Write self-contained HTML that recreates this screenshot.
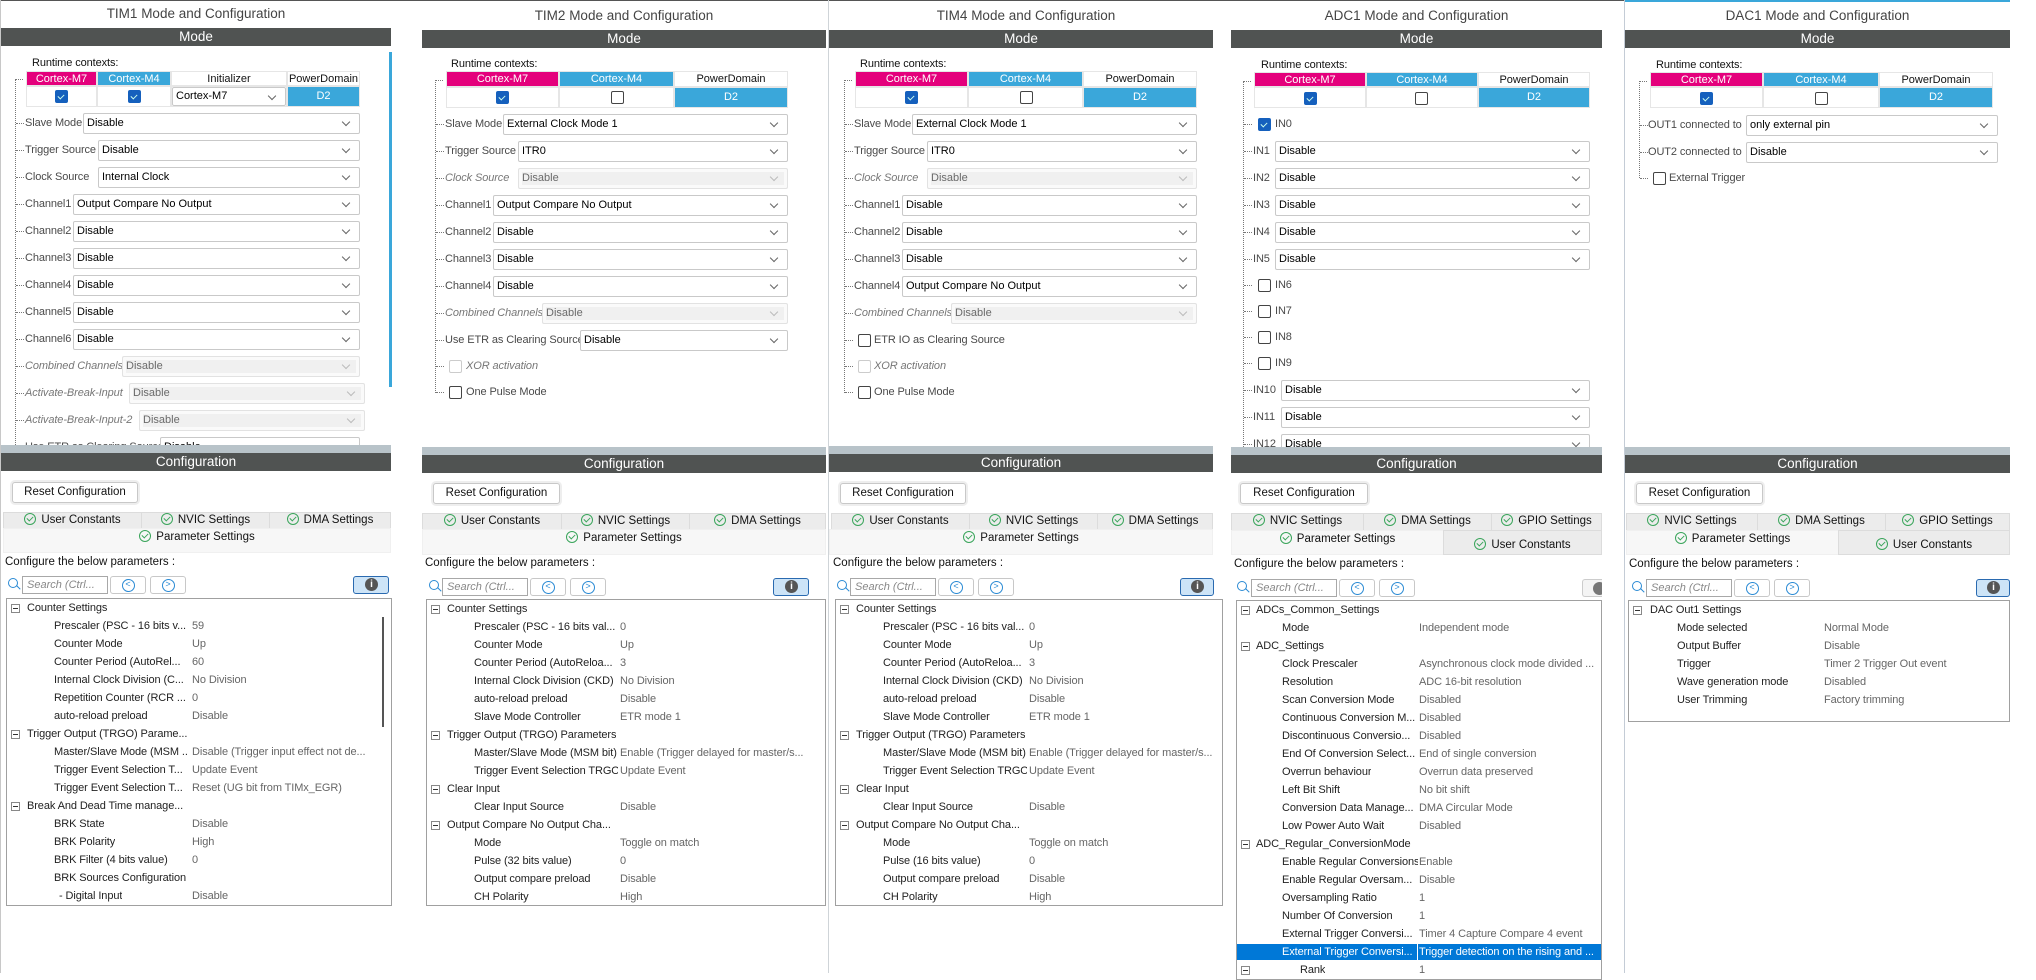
<!DOCTYPE html>
<html><head><meta charset="utf-8"><style>
*{box-sizing:border-box;margin:0;padding:0}
body{width:2036px;height:973px;overflow:hidden;background:#fff;position:relative;font-family:"Liberation Sans",Arial,sans-serif;font-size:12px;color:#222}
.a{position:absolute;white-space:nowrap}
.ti{position:absolute;font-size:13.5px;color:#444;text-align:center;line-height:18px}
.hd{position:absolute;height:18px;background:#505352;color:#fff;font-size:13.5px;text-align:center;line-height:18px}
.gs{position:absolute;height:8px;background:#b8c3c9}
.s{position:absolute;height:21px;border:1px solid #c9c9c9;border-radius:2px;background:#fff;font-size:11px;line-height:19px;padding-left:3px;color:#000;white-space:nowrap}
.s::after{content:"";position:absolute;right:10px;top:5px;width:5px;height:5px;border-right:1px solid #666;border-bottom:1px solid #666;transform:rotate(45deg)}
.s.d{background:#f0f0f0;border-color:#e2e2e2;color:#6a6a6a;box-shadow:inset 0 0 0 3px #fafafa}
.s.d::after{border-color:#bbb}
.lb{position:absolute;font-size:11px;letter-spacing:-0.1px;line-height:16px;color:#4a4a4a;white-space:nowrap}
.lb.i{font-style:italic;color:#777}
.dv{position:absolute;border-left:1px dotted #777}
.dh{position:absolute;width:8px;border-top:1px dotted #777}
.cb{position:absolute;width:13px;height:13px;border:1px solid #444;border-radius:2px;background:#fff}
.cb.g{border-color:#ccc}
.cb.on{background:#1560bd;border-color:#1560bd}
.cb.on::after{content:"";position:absolute;left:3px;top:2px;width:3px;height:5px;border-right:1px solid #cfe;border-bottom:1px solid #cfe;transform:rotate(45deg)}
.c{position:absolute;font-size:11px;text-align:center;line-height:15px;color:#fff;border:1px solid #e6e6e6}
.m7{background:#e4007c}.m4{background:#3aa7da}.wh{background:#fff;color:#111}
.bt{position:absolute;height:21px;border:1px solid #c8c8c8;border-radius:3px;background:#fff;font-size:11.5px;line-height:19px;text-align:center;color:#111;box-shadow:0 0 0 2px #eee}
.tb{position:absolute;background:#ececec;border:1px solid #dcdcdc;font-size:11.5px;text-align:center;color:#111;line-height:15px;white-space:nowrap;overflow:hidden}
.tb.ac{background:#f7f7f7;border-color:#f0f0f0;line-height:24px}
.tb.dk{line-height:26px}
.ck{display:inline-block;width:12px;height:12px;border:1.3px solid #3aa55b;border-radius:50%;vertical-align:-2px;margin-right:5px;position:relative}
.ck::after{content:"";position:absolute;left:3px;top:1px;width:3px;height:5px;border-right:1.3px solid #3aa55b;border-bottom:1.3px solid #3aa55b;transform:rotate(45deg)}
.cf{position:absolute;font-size:11.5px;color:#111}
.sr{position:absolute;height:18px;border:1px solid #a8a8a8;font-size:11px;font-style:italic;color:#888;line-height:16px;padding-left:4px;overflow:hidden;white-space:nowrap}
.nb{position:absolute;height:18px;width:36px;border:1px solid #c8c8c8;border-radius:3px;background:#fff;font-size:9px;color:#2a8ad4;text-align:center;line-height:15px}
.nb::after{content:"";position:absolute;left:11px;top:2px;width:11px;height:11px;border:1.3px solid #2a8ad4;border-radius:50%}
.ib{position:absolute;height:18px;border:1.5px solid #2a6ab0;border-radius:3px;background:#cde4f7}
.ib::after{content:"i";position:absolute;left:50%;margin-left:-6px;top:1px;width:13px;height:13px;border-radius:50%;background:#555;color:#fff;font-weight:bold;font-size:10px;text-align:center;line-height:13px}
.mg{position:absolute;width:10px;height:10px;border:1.6px solid #2a8ad4;border-radius:50%}
.mg::after{content:"";position:absolute;left:7px;top:8px;width:5px;border-top:1.6px solid #2a8ad4;transform:rotate(45deg)}
.bx{position:absolute;border:1px solid #a0a0a0;background:#fff;overflow:hidden}
.r{position:absolute;font-size:11px;letter-spacing:-0.1px;line-height:18px;height:18px;color:#222;white-space:nowrap;max-width:var(--w);overflow:hidden}
.r.g{max-width:none}
.v{position:absolute;font-size:11px;letter-spacing:-0.1px;line-height:18px;height:18px;color:#666;white-space:nowrap}
.ex{position:absolute;width:9px;height:9px;border:1px solid #888}
.ex::after{content:"";position:absolute;left:1px;top:3px;width:5px;border-top:1px solid #333}
</style></head><body>

<div class="a" style="left:0;top:0;width:1624px;height:1px;background:#555"></div>
<div class="a" style="left:1625px;top:0;width:385px;height:2px;background:#3aa7da"></div>
<div class="a" style="left:0;top:0;width:1px;height:973px;background:#c8c8c8"></div>
<div class="a" style="left:828px;top:0;width:1px;height:973px;background:#cfd4d8"></div>
<div class="a" style="left:1624px;top:0;width:1px;height:973px;background:#c4ccd6"></div>

<!-- ================= TIM1 ================= -->
<div class="ti" style="left:1px;top:5px;width:390px">TIM1 Mode and Configuration</div>
<div class="hd" style="left:1px;top:28px;width:390px">Mode</div>
<div class="a" style="left:389px;top:52px;width:3px;height:335px;background:#3aa7da"></div>
<div class="lb" style="left:32px;top:55px;color:#111">Runtime contexts:</div>
<div class="c m7" style="left:26px;top:71px;width:71px;height:15px">Cortex-M7</div>
<div class="c m4" style="left:97px;top:71px;width:74px;height:15px">Cortex-M4</div>
<div class="c wh" style="left:171px;top:71px;width:116px;height:15px">Initializer</div>
<div class="c wh" style="left:287px;top:71px;width:73px;height:15px">PowerDomain</div>
<div class="c wh" style="left:26px;top:86px;width:71px;height:21px"></div>
<div class="c wh" style="left:97px;top:86px;width:74px;height:21px"></div>
<div class="c wh" style="left:171px;top:86px;width:116px;height:21px"></div>
<div class="c m4" style="left:287px;top:86px;width:73px;height:21px;line-height:19px">D2</div>
<div class="cb on" style="left:55px;top:90px"></div>
<div class="cb on" style="left:128px;top:90px"></div>
<div class="s" style="left:172px;top:87px;width:114px;height:19px;line-height:17px">Cortex-M7</div>
<div class="dv" style="left:15px;top:79px;height:370px"></div>
<div class="dh" style="left:15px;top:79px"></div>

<div class="dh" style="left:16px;top:123px"></div><div class="lb" style="left:25px;top:115px">Slave Mode</div><div class="s" style="left:83px;top:113px;width:277px">Disable</div>
<div class="dh" style="left:16px;top:150px"></div><div class="lb" style="left:25px;top:142px">Trigger Source</div><div class="s" style="left:98px;top:140px;width:262px">Disable</div>
<div class="dh" style="left:16px;top:177px"></div><div class="lb" style="left:25px;top:169px">Clock Source</div><div class="s" style="left:98px;top:167px;width:262px">Internal Clock</div>
<div class="dh" style="left:16px;top:204px"></div><div class="lb" style="left:25px;top:196px">Channel1</div><div class="s" style="left:73px;top:194px;width:287px">Output Compare No Output</div>
<div class="dh" style="left:16px;top:231px"></div><div class="lb" style="left:25px;top:223px">Channel2</div><div class="s" style="left:73px;top:221px;width:287px">Disable</div>
<div class="dh" style="left:16px;top:258px"></div><div class="lb" style="left:25px;top:250px">Channel3</div><div class="s" style="left:73px;top:248px;width:287px">Disable</div>
<div class="dh" style="left:16px;top:285px"></div><div class="lb" style="left:25px;top:277px">Channel4</div><div class="s" style="left:73px;top:275px;width:287px">Disable</div>
<div class="dh" style="left:16px;top:312px"></div><div class="lb" style="left:25px;top:304px">Channel5</div><div class="s" style="left:73px;top:302px;width:287px">Disable</div>
<div class="dh" style="left:16px;top:339px"></div><div class="lb" style="left:25px;top:331px">Channel6</div><div class="s" style="left:73px;top:329px;width:287px">Disable</div>
<div class="dh" style="left:16px;top:366px"></div><div class="lb i" style="left:25px;top:358px">Combined Channels</div><div class="s d" style="left:122px;top:356px;width:238px">Disable</div>
<div class="dh" style="left:16px;top:393px"></div><div class="lb i" style="left:25px;top:385px">Activate-Break-Input</div><div class="s d" style="left:129px;top:383px;width:236px">Disable</div>
<div class="dh" style="left:16px;top:420px"></div><div class="lb i" style="left:25px;top:412px">Activate-Break-Input-2</div><div class="s d" style="left:139px;top:410px;width:226px">Disable</div>
<div class="dh" style="left:16px;top:447px"></div><div class="lb" style="left:25px;top:439px">Use ETR as Clearing Source</div><div class="s" style="left:160px;top:437px;width:200px">Disable</div>

<div class="gs" style="left:1px;top:445px;width:390px"></div>
<div class="hd" style="left:1px;top:453px;width:390px">Configuration</div>
<div class="bt" style="left:12px;top:482px;width:126px">Reset Configuration</div>
<div class="tb" style="left:3px;top:512px;width:139px;height:17px"><span class="ck"></span>User Constants</div>
<div class="tb" style="left:141px;top:512px;width:129px;height:17px"><span class="ck"></span>NVIC Settings</div>
<div class="tb" style="left:269px;top:512px;width:122px;height:17px"><span class="ck"></span>DMA Settings</div>
<div class="tb ac" style="left:3px;top:528px;width:388px;height:25px;line-height:16px"><span class="ck"></span>Parameter Settings</div>
<div class="cf" style="left:5px;top:556px">Configure the below parameters :</div>
<div class="mg" style="left:8px;top:578px"></div>
<div class="sr" style="left:22px;top:576px;width:86px">Search (Ctrl...</div>
<div class="nb" style="left:110px;top:576px">&lt;</div><div class="nb" style="left:150px;top:576px">&gt;</div>
<div class="ib" style="left:353px;top:576px;width:36px"></div>
<div class="bx" style="left:6px;top:598px;width:386px;height:308px;--w:134px">
<div class="a" style="left:375px;top:18px;width:2px;height:110px;background:#555"></div>
<div class="ex" style="left:4px;top:5px"></div><div class="r g" style="left:20px;top:0">Counter Settings</div>
<div class="r" style="left:47px;top:18px">Prescaler (PSC - 16 bits v...</div><div class="v" style="left:185px;top:18px">59</div>
<div class="r" style="left:47px;top:36px">Counter Mode</div><div class="v" style="left:185px;top:36px">Up</div>
<div class="r" style="left:47px;top:54px">Counter Period (AutoRel...</div><div class="v" style="left:185px;top:54px">60</div>
<div class="r" style="left:47px;top:72px">Internal Clock Division (C...</div><div class="v" style="left:185px;top:72px">No Division</div>
<div class="r" style="left:47px;top:90px">Repetition Counter (RCR ...</div><div class="v" style="left:185px;top:90px">0</div>
<div class="r" style="left:47px;top:108px">auto-reload preload</div><div class="v" style="left:185px;top:108px">Disable</div>
<div class="ex" style="left:4px;top:131px"></div><div class="r g" style="left:20px;top:126px">Trigger Output (TRGO) Parame...</div>
<div class="r" style="left:47px;top:144px">Master/Slave Mode (MSM ...</div><div class="v" style="left:185px;top:144px">Disable (Trigger input effect not de...</div>
<div class="r" style="left:47px;top:162px">Trigger Event Selection T...</div><div class="v" style="left:185px;top:162px">Update Event</div>
<div class="r" style="left:47px;top:180px">Trigger Event Selection T...</div><div class="v" style="left:185px;top:180px">Reset (UG bit from TIMx_EGR)</div>
<div class="ex" style="left:4px;top:203px"></div><div class="r g" style="left:20px;top:198px">Break And Dead Time manage...</div>
<div class="r" style="left:47px;top:216px">BRK State</div><div class="v" style="left:185px;top:216px">Disable</div>
<div class="r" style="left:47px;top:234px">BRK Polarity</div><div class="v" style="left:185px;top:234px">High</div>
<div class="r" style="left:47px;top:252px">BRK Filter (4 bits value)</div><div class="v" style="left:185px;top:252px">0</div>
<div class="r g" style="left:47px;top:270px">BRK Sources Configuration</div>
<div class="r" style="left:52px;top:288px">- Digital Input</div><div class="v" style="left:185px;top:288px">Disable</div>
</div>

<!-- ================= TIM2 ================= -->
<div class="ti" style="left:422px;top:7px;width:404px">TIM2 Mode and Configuration</div>
<div class="hd" style="left:422px;top:30px;width:404px">Mode</div>
<div class="lb" style="left:451px;top:56px;color:#111">Runtime contexts:</div>
<div class="c m7" style="left:446px;top:71px;width:113px;height:16px">Cortex-M7</div>
<div class="c m4" style="left:559px;top:71px;width:115px;height:16px">Cortex-M4</div>
<div class="c wh" style="left:674px;top:71px;width:114px;height:16px">PowerDomain</div>
<div class="c wh" style="left:446px;top:87px;width:113px;height:21px"></div>
<div class="c wh" style="left:559px;top:87px;width:115px;height:21px"></div>
<div class="c m4" style="left:674px;top:87px;width:114px;height:21px;line-height:19px">D2</div>
<div class="cb on" style="left:496px;top:91px"></div>
<div class="cb" style="left:611px;top:91px"></div>
<div class="dv" style="left:435px;top:80px;height:313px"></div>
<div class="dh" style="left:435px;top:80px"></div>
<div class="dh" style="left:436px;top:124px"></div><div class="lb" style="left:445px;top:116px">Slave Mode</div><div class="s" style="left:503px;top:114px;width:285px">External Clock Mode 1</div>
<div class="dh" style="left:436px;top:151px"></div><div class="lb" style="left:445px;top:143px">Trigger Source</div><div class="s" style="left:518px;top:141px;width:270px">ITR0</div>
<div class="dh" style="left:436px;top:178px"></div><div class="lb i" style="left:445px;top:170px">Clock Source</div><div class="s d" style="left:518px;top:168px;width:270px">Disable</div>
<div class="dh" style="left:436px;top:205px"></div><div class="lb" style="left:445px;top:197px">Channel1</div><div class="s" style="left:493px;top:195px;width:295px">Output Compare No Output</div>
<div class="dh" style="left:436px;top:232px"></div><div class="lb" style="left:445px;top:224px">Channel2</div><div class="s" style="left:493px;top:222px;width:295px">Disable</div>
<div class="dh" style="left:436px;top:259px"></div><div class="lb" style="left:445px;top:251px">Channel3</div><div class="s" style="left:493px;top:249px;width:295px">Disable</div>
<div class="dh" style="left:436px;top:286px"></div><div class="lb" style="left:445px;top:278px">Channel4</div><div class="s" style="left:493px;top:276px;width:295px">Disable</div>
<div class="dh" style="left:436px;top:313px"></div><div class="lb i" style="left:445px;top:305px">Combined Channels</div><div class="s d" style="left:542px;top:303px;width:246px">Disable</div>
<div class="dh" style="left:436px;top:340px"></div><div class="lb" style="left:445px;top:332px">Use ETR as Clearing Source</div><div class="s" style="left:580px;top:330px;width:208px">Disable</div>
<div class="dh" style="left:436px;top:366px"></div><div class="cb g" style="left:449px;top:360px"></div><div class="lb i" style="left:466px;top:358px">XOR activation</div>
<div class="dh" style="left:436px;top:392px"></div><div class="cb" style="left:449px;top:386px"></div><div class="lb" style="left:466px;top:384px">One Pulse Mode</div>

<div class="gs" style="left:422px;top:447px;width:404px"></div>
<div class="hd" style="left:422px;top:455px;width:404px">Configuration</div>
<div class="bt" style="left:433px;top:483px;width:127px">Reset Configuration</div>
<div class="tb" style="left:422px;top:513px;width:140px;height:17px"><span class="ck"></span>User Constants</div>
<div class="tb" style="left:561px;top:513px;width:129px;height:17px"><span class="ck"></span>NVIC Settings</div>
<div class="tb" style="left:689px;top:513px;width:137px;height:17px"><span class="ck"></span>DMA Settings</div>
<div class="tb ac" style="left:422px;top:529px;width:404px;height:26px;line-height:16px"><span class="ck"></span>Parameter Settings</div>
<div class="cf" style="left:425px;top:557px">Configure the below parameters :</div>
<div class="mg" style="left:429px;top:580px"></div>
<div class="sr" style="left:442px;top:578px;width:86px">Search (Ctrl...</div>
<div class="nb" style="left:530px;top:578px">&lt;</div><div class="nb" style="left:570px;top:578px">&gt;</div>
<div class="ib" style="left:773px;top:578px;width:36px"></div>
<div class="bx" style="left:426px;top:599px;width:400px;height:307px;--w:144px">
<div class="ex" style="left:4px;top:5px"></div><div class="r g" style="left:20px;top:0">Counter Settings</div>
<div class="r" style="left:47px;top:18px">Prescaler (PSC - 16 bits val...</div><div class="v" style="left:193px;top:18px">0</div>
<div class="r" style="left:47px;top:36px">Counter Mode</div><div class="v" style="left:193px;top:36px">Up</div>
<div class="r" style="left:47px;top:54px">Counter Period (AutoReloa...</div><div class="v" style="left:193px;top:54px">3</div>
<div class="r" style="left:47px;top:72px">Internal Clock Division (CKD)</div><div class="v" style="left:193px;top:72px">No Division</div>
<div class="r" style="left:47px;top:90px">auto-reload preload</div><div class="v" style="left:193px;top:90px">Disable</div>
<div class="r" style="left:47px;top:108px">Slave Mode Controller</div><div class="v" style="left:193px;top:108px">ETR mode 1</div>
<div class="ex" style="left:4px;top:131px"></div><div class="r g" style="left:20px;top:126px">Trigger Output (TRGO) Parameters</div>
<div class="r" style="left:47px;top:144px">Master/Slave Mode (MSM bit)</div><div class="v" style="left:193px;top:144px">Enable (Trigger delayed for master/s...</div>
<div class="r" style="left:47px;top:162px">Trigger Event Selection TRGO</div><div class="v" style="left:193px;top:162px">Update Event</div>
<div class="ex" style="left:4px;top:185px"></div><div class="r g" style="left:20px;top:180px">Clear Input</div>
<div class="r" style="left:47px;top:198px">Clear Input Source</div><div class="v" style="left:193px;top:198px">Disable</div>
<div class="ex" style="left:4px;top:221px"></div><div class="r g" style="left:20px;top:216px">Output Compare No Output Cha...</div>
<div class="r" style="left:47px;top:234px">Mode</div><div class="v" style="left:193px;top:234px">Toggle on match</div>
<div class="r" style="left:47px;top:252px">Pulse (32 bits value)</div><div class="v" style="left:193px;top:252px">0</div>
<div class="r" style="left:47px;top:270px">Output compare preload</div><div class="v" style="left:193px;top:270px">Disable</div>
<div class="r" style="left:47px;top:288px">CH Polarity</div><div class="v" style="left:193px;top:288px">High</div>
</div>

<!-- ================= TIM4 ================= -->
<div class="ti" style="left:829px;top:7px;width:394px">TIM4 Mode and Configuration</div>
<div class="hd" style="left:829px;top:30px;width:384px">Mode</div>
<div class="lb" style="left:860px;top:56px;color:#111">Runtime contexts:</div>
<div class="c m7" style="left:855px;top:71px;width:113px;height:16px">Cortex-M7</div>
<div class="c m4" style="left:968px;top:71px;width:115px;height:16px">Cortex-M4</div>
<div class="c wh" style="left:1083px;top:71px;width:114px;height:16px">PowerDomain</div>
<div class="c wh" style="left:855px;top:87px;width:113px;height:21px"></div>
<div class="c wh" style="left:968px;top:87px;width:115px;height:21px"></div>
<div class="c m4" style="left:1083px;top:87px;width:114px;height:21px;line-height:19px">D2</div>
<div class="cb on" style="left:905px;top:91px"></div>
<div class="cb" style="left:1020px;top:91px"></div>
<div class="dv" style="left:844px;top:80px;height:313px"></div>
<div class="dh" style="left:844px;top:80px"></div>
<div class="dh" style="left:845px;top:124px"></div><div class="lb" style="left:854px;top:116px">Slave Mode</div><div class="s" style="left:912px;top:114px;width:285px">External Clock Mode 1</div>
<div class="dh" style="left:845px;top:151px"></div><div class="lb" style="left:854px;top:143px">Trigger Source</div><div class="s" style="left:927px;top:141px;width:270px">ITR0</div>
<div class="dh" style="left:845px;top:178px"></div><div class="lb i" style="left:854px;top:170px">Clock Source</div><div class="s d" style="left:927px;top:168px;width:270px">Disable</div>
<div class="dh" style="left:845px;top:205px"></div><div class="lb" style="left:854px;top:197px">Channel1</div><div class="s" style="left:902px;top:195px;width:295px">Disable</div>
<div class="dh" style="left:845px;top:232px"></div><div class="lb" style="left:854px;top:224px">Channel2</div><div class="s" style="left:902px;top:222px;width:295px">Disable</div>
<div class="dh" style="left:845px;top:259px"></div><div class="lb" style="left:854px;top:251px">Channel3</div><div class="s" style="left:902px;top:249px;width:295px">Disable</div>
<div class="dh" style="left:845px;top:286px"></div><div class="lb" style="left:854px;top:278px">Channel4</div><div class="s" style="left:902px;top:276px;width:295px">Output Compare No Output</div>
<div class="dh" style="left:845px;top:313px"></div><div class="lb i" style="left:854px;top:305px">Combined Channels</div><div class="s d" style="left:951px;top:303px;width:246px">Disable</div>
<div class="dh" style="left:845px;top:340px"></div><div class="cb" style="left:858px;top:334px"></div><div class="lb" style="left:874px;top:332px">ETR IO as Clearing Source</div>
<div class="dh" style="left:845px;top:366px"></div><div class="cb g" style="left:858px;top:360px"></div><div class="lb i" style="left:874px;top:358px">XOR activation</div>
<div class="dh" style="left:845px;top:392px"></div><div class="cb" style="left:858px;top:386px"></div><div class="lb" style="left:874px;top:384px">One Pulse Mode</div>

<div class="gs" style="left:829px;top:446px;width:384px"></div>
<div class="hd" style="left:829px;top:454px;width:384px">Configuration</div>
<div class="bt" style="left:840px;top:483px;width:126px">Reset Configuration</div>
<div class="tb" style="left:831px;top:513px;width:139px;height:17px"><span class="ck"></span>User Constants</div>
<div class="tb" style="left:969px;top:513px;width:129px;height:17px"><span class="ck"></span>NVIC Settings</div>
<div class="tb" style="left:1097px;top:513px;width:116px;height:17px"><span class="ck"></span>DMA Settings</div>
<div class="tb ac" style="left:829px;top:529px;width:384px;height:26px;line-height:16px"><span class="ck"></span>Parameter Settings</div>
<div class="cf" style="left:833px;top:557px">Configure the below parameters :</div>
<div class="mg" style="left:837px;top:580px"></div>
<div class="sr" style="left:850px;top:578px;width:86px">Search (Ctrl...</div>
<div class="nb" style="left:938px;top:578px">&lt;</div><div class="nb" style="left:978px;top:578px">&gt;</div>
<div class="ib" style="left:1180px;top:578px;width:34px"></div>
<div class="bx" style="left:835px;top:599px;width:388px;height:307px;--w:144px">
<div class="ex" style="left:4px;top:5px"></div><div class="r g" style="left:20px;top:0">Counter Settings</div>
<div class="r" style="left:47px;top:18px">Prescaler (PSC - 16 bits val...</div><div class="v" style="left:193px;top:18px">0</div>
<div class="r" style="left:47px;top:36px">Counter Mode</div><div class="v" style="left:193px;top:36px">Up</div>
<div class="r" style="left:47px;top:54px">Counter Period (AutoReloa...</div><div class="v" style="left:193px;top:54px">3</div>
<div class="r" style="left:47px;top:72px">Internal Clock Division (CKD)</div><div class="v" style="left:193px;top:72px">No Division</div>
<div class="r" style="left:47px;top:90px">auto-reload preload</div><div class="v" style="left:193px;top:90px">Disable</div>
<div class="r" style="left:47px;top:108px">Slave Mode Controller</div><div class="v" style="left:193px;top:108px">ETR mode 1</div>
<div class="ex" style="left:4px;top:131px"></div><div class="r g" style="left:20px;top:126px">Trigger Output (TRGO) Parameters</div>
<div class="r" style="left:47px;top:144px">Master/Slave Mode (MSM bit)</div><div class="v" style="left:193px;top:144px">Enable (Trigger delayed for master/s...</div>
<div class="r" style="left:47px;top:162px">Trigger Event Selection TRGO</div><div class="v" style="left:193px;top:162px">Update Event</div>
<div class="ex" style="left:4px;top:185px"></div><div class="r g" style="left:20px;top:180px">Clear Input</div>
<div class="r" style="left:47px;top:198px">Clear Input Source</div><div class="v" style="left:193px;top:198px">Disable</div>
<div class="ex" style="left:4px;top:221px"></div><div class="r g" style="left:20px;top:216px">Output Compare No Output Cha...</div>
<div class="r" style="left:47px;top:234px">Mode</div><div class="v" style="left:193px;top:234px">Toggle on match</div>
<div class="r" style="left:47px;top:252px">Pulse (16 bits value)</div><div class="v" style="left:193px;top:252px">0</div>
<div class="r" style="left:47px;top:270px">Output compare preload</div><div class="v" style="left:193px;top:270px">Disable</div>
<div class="r" style="left:47px;top:288px">CH Polarity</div><div class="v" style="left:193px;top:288px">High</div>
</div>

<!-- ================= ADC1 ================= -->
<div class="ti" style="left:1231px;top:7px;width:371px">ADC1 Mode and Configuration</div>
<div class="hd" style="left:1231px;top:30px;width:371px">Mode</div>
<div class="lb" style="left:1261px;top:57px;color:#111">Runtime contexts:</div>
<div class="c m7" style="left:1254px;top:72px;width:112px;height:15px">Cortex-M7</div>
<div class="c m4" style="left:1366px;top:72px;width:112px;height:15px">Cortex-M4</div>
<div class="c wh" style="left:1478px;top:72px;width:112px;height:15px">PowerDomain</div>
<div class="c wh" style="left:1254px;top:87px;width:112px;height:21px"></div>
<div class="c wh" style="left:1366px;top:87px;width:112px;height:21px"></div>
<div class="c m4" style="left:1478px;top:87px;width:112px;height:21px;line-height:19px">D2</div>
<div class="cb on" style="left:1304px;top:92px"></div>
<div class="cb" style="left:1415px;top:92px"></div>
<div class="dv" style="left:1243px;top:81px;height:366px"></div>
<div class="dh" style="left:1243px;top:81px"></div>
<div class="dh" style="left:1244px;top:124px"></div><div class="cb on" style="left:1258px;top:118px"></div><div class="lb" style="left:1275px;top:116px">IN0</div>
<div class="dh" style="left:1244px;top:151px"></div><div class="lb" style="left:1253px;top:143px">IN1</div><div class="s" style="left:1275px;top:141px;width:315px">Disable</div>
<div class="dh" style="left:1244px;top:178px"></div><div class="lb" style="left:1253px;top:170px">IN2</div><div class="s" style="left:1275px;top:168px;width:315px">Disable</div>
<div class="dh" style="left:1244px;top:205px"></div><div class="lb" style="left:1253px;top:197px">IN3</div><div class="s" style="left:1275px;top:195px;width:315px">Disable</div>
<div class="dh" style="left:1244px;top:232px"></div><div class="lb" style="left:1253px;top:224px">IN4</div><div class="s" style="left:1275px;top:222px;width:315px">Disable</div>
<div class="dh" style="left:1244px;top:259px"></div><div class="lb" style="left:1253px;top:251px">IN5</div><div class="s" style="left:1275px;top:249px;width:315px">Disable</div>
<div class="dh" style="left:1244px;top:285px"></div><div class="cb" style="left:1258px;top:279px"></div><div class="lb" style="left:1275px;top:277px">IN6</div>
<div class="dh" style="left:1244px;top:311px"></div><div class="cb" style="left:1258px;top:305px"></div><div class="lb" style="left:1275px;top:303px">IN7</div>
<div class="dh" style="left:1244px;top:337px"></div><div class="cb" style="left:1258px;top:331px"></div><div class="lb" style="left:1275px;top:329px">IN8</div>
<div class="dh" style="left:1244px;top:363px"></div><div class="cb" style="left:1258px;top:357px"></div><div class="lb" style="left:1275px;top:355px">IN9</div>
<div class="dh" style="left:1244px;top:390px"></div><div class="lb" style="left:1253px;top:382px">IN10</div><div class="s" style="left:1281px;top:380px;width:309px">Disable</div>
<div class="dh" style="left:1244px;top:417px"></div><div class="lb" style="left:1253px;top:409px">IN11</div><div class="s" style="left:1281px;top:407px;width:309px">Disable</div>
<div class="dh" style="left:1244px;top:444px"></div><div class="lb" style="left:1253px;top:436px">IN12</div><div class="s" style="left:1281px;top:434px;width:309px">Disable</div>

<div class="gs" style="left:1231px;top:447px;width:371px"></div>
<div class="hd" style="left:1231px;top:455px;width:371px">Configuration</div>
<div class="bt" style="left:1240px;top:483px;width:128px">Reset Configuration</div>
<div class="tb" style="left:1231px;top:513px;width:133px;height:18px"><span class="ck"></span>NVIC Settings</div>
<div class="tb" style="left:1363px;top:513px;width:129px;height:18px"><span class="ck"></span>DMA Settings</div>
<div class="tb" style="left:1491px;top:513px;width:111px;height:18px"><span class="ck"></span>GPIO Settings</div>
<div class="tb ac" style="left:1231px;top:530px;width:213px;height:25px;line-height:16px"><span class="ck"></span>Parameter Settings</div>
<div class="tb dk" style="left:1443px;top:530px;width:159px;height:25px;line-height:28px"><span class="ck"></span>User Constants</div>
<div class="cf" style="left:1234px;top:558px">Configure the below parameters :</div>
<div class="mg" style="left:1237px;top:581px"></div>
<div class="sr" style="left:1251px;top:579px;width:86px">Search (Ctrl...</div>
<div class="nb" style="left:1339px;top:579px">&lt;</div><div class="nb" style="left:1379px;top:579px">&gt;</div>
<div class="a" style="left:1582px;top:579px;width:20px;height:18px;border:1px solid #ccc;border-right:none;border-radius:3px 0 0 3px;background:#f4f4f4;overflow:hidden"><div class="a" style="left:10px;top:2px;width:13px;height:13px;border-radius:50%;background:#777"></div></div>
<div class="bx" style="left:1236px;top:600px;width:366px;height:380px;--w:136px">
<div class="ex" style="left:4px;top:5px"></div><div class="r g" style="left:19px;top:0">ADCs_Common_Settings</div>
<div class="r" style="left:45px;top:18px">Mode</div><div class="v" style="left:182px;top:18px">Independent mode</div>
<div class="ex" style="left:4px;top:41px"></div><div class="r g" style="left:19px;top:36px">ADC_Settings</div>
<div class="r" style="left:45px;top:54px">Clock Prescaler</div><div class="v" style="left:182px;top:54px">Asynchronous clock mode divided ...</div>
<div class="r" style="left:45px;top:72px">Resolution</div><div class="v" style="left:182px;top:72px">ADC 16-bit resolution</div>
<div class="r" style="left:45px;top:90px">Scan Conversion Mode</div><div class="v" style="left:182px;top:90px">Disabled</div>
<div class="r" style="left:45px;top:108px">Continuous Conversion M...</div><div class="v" style="left:182px;top:108px">Disabled</div>
<div class="r" style="left:45px;top:126px">Discontinuous Conversio...</div><div class="v" style="left:182px;top:126px">Disabled</div>
<div class="r" style="left:45px;top:144px">End Of Conversion Select...</div><div class="v" style="left:182px;top:144px">End of single conversion</div>
<div class="r" style="left:45px;top:162px">Overrun behaviour</div><div class="v" style="left:182px;top:162px">Overrun data preserved</div>
<div class="r" style="left:45px;top:180px">Left Bit Shift</div><div class="v" style="left:182px;top:180px">No bit shift</div>
<div class="r" style="left:45px;top:198px">Conversion Data Manage...</div><div class="v" style="left:182px;top:198px">DMA Circular Mode</div>
<div class="r" style="left:45px;top:216px">Low Power Auto Wait</div><div class="v" style="left:182px;top:216px">Disabled</div>
<div class="ex" style="left:4px;top:239px"></div><div class="r g" style="left:19px;top:234px">ADC_Regular_ConversionMode</div>
<div class="r" style="left:45px;top:252px">Enable Regular Conversions</div><div class="v" style="left:182px;top:252px">Enable</div>
<div class="r" style="left:45px;top:270px">Enable Regular Oversam...</div><div class="v" style="left:182px;top:270px">Disable</div>
<div class="r" style="left:45px;top:288px">Oversampling Ratio</div><div class="v" style="left:182px;top:288px">1</div>
<div class="r" style="left:45px;top:306px">Number Of Conversion</div><div class="v" style="left:182px;top:306px">1</div>
<div class="r" style="left:45px;top:324px">External Trigger Conversi...</div><div class="v" style="left:182px;top:324px">Timer 4 Capture Compare 4 event</div>
<div class="a" style="left:0;top:343px;width:366px;height:16px;background:#0078d7"></div>
<div class="a" style="left:180px;top:343px;width:1px;height:16px;background:#fff"></div>
<div class="r" style="left:45px;top:342px;color:#fff">External Trigger Conversi...</div><div class="v" style="left:182px;top:342px;color:#fff">Trigger detection on the rising and ...</div>
<div class="ex" style="left:4px;top:365px"></div><div class="r" style="left:63px;top:360px">Rank</div><div class="v" style="left:182px;top:360px">1</div>
</div>

<!-- ================= DAC1 ================= -->
<div class="ti" style="left:1625px;top:7px;width:385px">DAC1 Mode and Configuration</div>
<div class="hd" style="left:1625px;top:30px;width:385px">Mode</div>
<div class="lb" style="left:1656px;top:57px;color:#111">Runtime contexts:</div>
<div class="c m7" style="left:1650px;top:72px;width:113px;height:15px">Cortex-M7</div>
<div class="c m4" style="left:1763px;top:72px;width:116px;height:15px">Cortex-M4</div>
<div class="c wh" style="left:1879px;top:72px;width:114px;height:15px">PowerDomain</div>
<div class="c wh" style="left:1650px;top:87px;width:113px;height:21px"></div>
<div class="c wh" style="left:1763px;top:87px;width:116px;height:21px"></div>
<div class="c m4" style="left:1879px;top:87px;width:114px;height:21px;line-height:19px">D2</div>
<div class="cb on" style="left:1700px;top:92px"></div>
<div class="cb" style="left:1815px;top:92px"></div>
<div class="dv" style="left:1639px;top:81px;height:97px"></div>
<div class="dh" style="left:1639px;top:81px"></div>
<div class="dh" style="left:1640px;top:125px"></div><div class="lb" style="left:1648px;top:117px">OUT1 connected to</div><div class="s" style="left:1746px;top:115px;width:252px">only external pin</div>
<div class="dh" style="left:1640px;top:152px"></div><div class="lb" style="left:1648px;top:144px">OUT2 connected to</div><div class="s" style="left:1746px;top:142px;width:252px">Disable</div>
<div class="dh" style="left:1640px;top:178px"></div><div class="cb" style="left:1653px;top:172px"></div><div class="lb" style="left:1669px;top:170px">External Trigger</div>

<div class="gs" style="left:1625px;top:447px;width:385px"></div>
<div class="hd" style="left:1625px;top:455px;width:385px">Configuration</div>
<div class="bt" style="left:1636px;top:483px;width:127px">Reset Configuration</div>
<div class="tb" style="left:1626px;top:513px;width:132px;height:18px"><span class="ck"></span>NVIC Settings</div>
<div class="tb" style="left:1757px;top:513px;width:129px;height:18px"><span class="ck"></span>DMA Settings</div>
<div class="tb" style="left:1885px;top:513px;width:125px;height:18px"><span class="ck"></span>GPIO Settings</div>
<div class="tb ac" style="left:1626px;top:530px;width:213px;height:25px;line-height:16px"><span class="ck"></span>Parameter Settings</div>
<div class="tb dk" style="left:1838px;top:530px;width:172px;height:25px;line-height:28px"><span class="ck"></span>User Constants</div>
<div class="cf" style="left:1629px;top:558px">Configure the below parameters :</div>
<div class="mg" style="left:1632px;top:581px"></div>
<div class="sr" style="left:1646px;top:579px;width:86px">Search (Ctrl...</div>
<div class="nb" style="left:1734px;top:579px">&lt;</div><div class="nb" style="left:1774px;top:579px">&gt;</div>
<div class="ib" style="left:1976px;top:579px;width:34px"></div>
<div class="bx" style="left:1628px;top:600px;width:382px;height:122px;--w:145px">
<div class="ex" style="left:4px;top:5px"></div><div class="r g" style="left:21px;top:0">DAC Out1 Settings</div>
<div class="r" style="left:48px;top:18px">Mode selected</div><div class="v" style="left:195px;top:18px">Normal Mode</div>
<div class="r" style="left:48px;top:36px">Output Buffer</div><div class="v" style="left:195px;top:36px">Disable</div>
<div class="r" style="left:48px;top:54px">Trigger</div><div class="v" style="left:195px;top:54px">Timer 2 Trigger Out event</div>
<div class="r" style="left:48px;top:72px">Wave generation mode</div><div class="v" style="left:195px;top:72px">Disabled</div>
<div class="r" style="left:48px;top:90px">User Trimming</div><div class="v" style="left:195px;top:90px">Factory trimming</div>
</div>

</body></html>
